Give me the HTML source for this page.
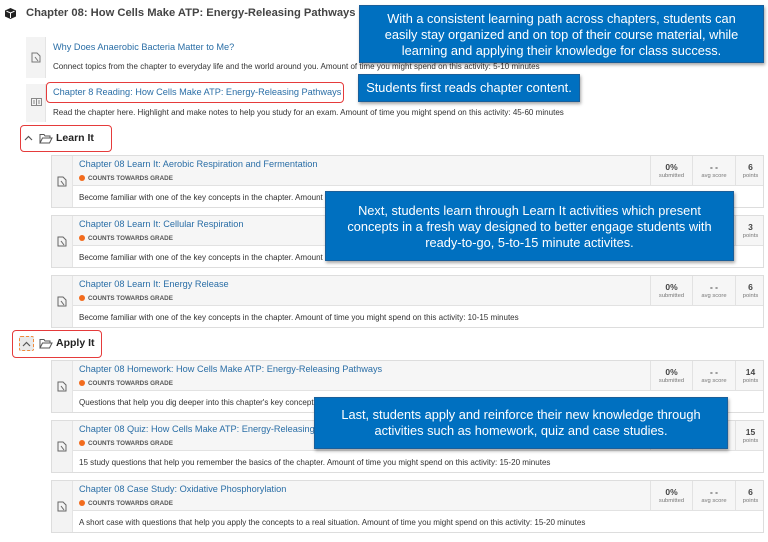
<!DOCTYPE html>
<html><head><meta charset="utf-8"><style>
*{margin:0;padding:0;box-sizing:border-box}
body{width:768px;height:542px;background:#fff;font-family:"Liberation Sans",sans-serif;position:relative;overflow:hidden;color:#333}
.a{position:absolute}
.title{left:26px;top:7px;font-size:11.2px;font-weight:bold;color:#444;white-space:nowrap}
.lnk{color:#2a6ea6;font-size:9.2px;white-space:nowrap}
.desc{font-size:8.05px;color:#333;white-space:nowrap}
.icol{background:#f3f3f3;border-right:1px solid #e4e4e4}
.card{border:1px solid #ddd;background:#fff}
.hdr{position:absolute;left:21px;right:0;top:0;height:30px;background:#f6f6f6;border-bottom:1px solid #e2e2e2}
.cnt{position:absolute;left:6px;top:19px;font-size:6.3px;font-weight:bold;color:#555;white-space:nowrap}
.cnt:before{content:"";display:inline-block;width:6px;height:6px;border-radius:50%;background:#f26b1d;margin-right:3px;vertical-align:-1px}
.st{position:absolute;top:0;height:30px;border-left:1px solid #e2e2e2;text-align:center;font-size:8.5px;font-weight:bold;color:#444;padding-top:6px}
.st small{display:block;font-size:5.8px;font-weight:normal;color:#777;margin-top:1px}
.call{background:#0070c0;color:#fff;font-size:12.8px;text-align:center;line-height:16px;box-shadow:1px 2px 3px rgba(0,0,0,.35);border:1px solid #1a5f9a}
.red{border:1.5px solid #e53b3b;border-radius:4px}
.sec{font-size:10.5px;font-weight:bold;color:#222}
</style></head><body>

<svg class="a" style="left:4px;top:7px" width="13" height="13" viewBox="0 0 13 13"><path d="M6.5 1 L12 3.5 V9.5 L6.5 12 L1 9.5 V3.5 Z" fill="#222"/><path d="M6.5 5.5 V11 M2.5 4.2 L6.5 6 L10.5 4.2" stroke="#fff" stroke-width="1" fill="none"/></svg>
<div class="a title">Chapter 08: How Cells Make ATP: Energy-Releasing Pathways</div>

<div class="a icol" style="left:26px;top:37px;width:20px;height:41px"></div>
<svg class="a" style="left:31px;top:52px" width="10" height="11" viewBox="0 0 10 11"><path d="M1 1H6L9 4V10H1Z" fill="none" stroke="#777" stroke-width="1"/><path d="M4 5L7 9" stroke="#777"/></svg>
<div class="a lnk" style="left:53px;top:42px">Why Does Anaerobic Bacteria Matter to Me?</div>
<div class="a desc" style="left:53px;top:62px">Connect topics from the chapter to everyday life and the world around you. Amount of time you might spend on this activity: 5-10 minutes</div>

<div class="a icol" style="left:26px;top:84px;width:20px;height:38px"></div>
<svg class="a" style="left:31px;top:98px" width="11" height="8" viewBox="0 0 11 8"><rect x="0.5" y="0.5" width="10" height="7" fill="none" stroke="#888"/><path d="M5.5 1V7M2 3H4M2 5H4M7 3H9M7 5H9" stroke="#888"/></svg>
<div class="a red" style="left:46px;top:82px;width:298px;height:21px"></div>
<div class="a lnk" style="left:53px;top:87px">Chapter 8 Reading: How Cells Make ATP: Energy-Releasing Pathways</div>
<div class="a desc" style="left:53px;top:108px">Read the chapter here. Highlight and make notes to help you study for an exam. Amount of time you might spend on this activity: 45-60 minutes</div>

<div class="a red" style="left:20px;top:125px;width:92px;height:27px"></div>
<svg class="a" style="left:24px;top:135px" width="9" height="6" viewBox="0 0 9 6"><path d="M1 5L4.5 1.5L8 5" fill="none" stroke="#555" stroke-width="1.2"/></svg>
<svg class="a" style="left:39px;top:133px" width="14" height="11" viewBox="0 0 14 11"><path d="M1 10V1.5H5L6 3H11V5M1 10L3.5 5H13L10.5 10Z" fill="none" stroke="#555" stroke-width="1"/></svg>
<div class="a sec" style="left:56px;top:132px">Learn It</div>

<div class="a red" style="left:12px;top:330px;width:90px;height:28px"></div>
<div class="a" style="left:19px;top:336px;width:15px;height:15px;border:1px dashed #f08a3a;background:#e9e9e9;border-radius:2px"></div>
<svg class="a" style="left:22px;top:341px" width="9" height="6" viewBox="0 0 9 6"><path d="M1 5L4.5 1.5L8 5" fill="none" stroke="#555" stroke-width="1.2"/></svg>
<svg class="a" style="left:39px;top:338px" width="14" height="11" viewBox="0 0 14 11"><path d="M1 10V1.5H5L6 3H11V5M1 10L3.5 5H13L10.5 10Z" fill="none" stroke="#555" stroke-width="1"/></svg>
<div class="a sec" style="left:56px;top:337px">Apply It</div>

<div id="cards"></div>
<script>
var items=[
[155,"Chapter 08 Learn It: Aerobic Respiration and Fermentation","6","Become familiar with one of the key concepts in the chapter. Amount"],
[215,"Chapter 08 Learn It: Cellular Respiration","3","Become familiar with one of the key concepts in the chapter. Amount"],
[275,"Chapter 08 Learn It: Energy Release","6","Become familiar with one of the key concepts in the chapter. Amount of time you might spend on this activity: 10-15 minutes"],
[360,"Chapter 08 Homework: How Cells Make ATP: Energy-Releasing Pathways","14","Questions that help you dig deeper into this chapter's key concepts."],
[420,"Chapter 08 Quiz: How Cells Make ATP: Energy-Releasing Pa","15","15 study questions that help you remember the basics of the chapter. Amount of time you might spend on this activity: 15-20 minutes"],
[480,"Chapter 08 Case Study: Oxidative Phosphorylation","6","A short case with questions that help you apply the concepts to a real situation. Amount of time you might spend on this activity: 15-20 minutes"]];
var h="";
items.forEach(function(it){
h+='<div class="a card" style="left:51px;top:'+it[0]+'px;width:713px;height:53px">'+
'<div class="a icol" style="left:0;top:0;width:21px;height:51px"></div>'+
'<svg class="a" style="left:5px;top:20px" width="10" height="11" viewBox="0 0 10 11"><path d="M1 1H6L9 4V10H1Z" fill="none" stroke="#666" stroke-width="1"/><path d="M4 5L7 9" stroke="#666"/></svg>'+
'<div class="hdr"><div class="a lnk" style="left:6px;top:3px">'+it[1]+'</div><div class="cnt">COUNTS TOWARDS GRADE</div>'+
'<div class="st" style="left:577px;width:42px">0%<small>submitted</small></div>'+
'<div class="st" style="left:619px;width:43px">- -<small>avg score</small></div>'+
'<div class="st" style="left:662px;width:30px">'+it[2]+'<small>points</small></div></div>'+
'<div class="a desc" style="left:27px;top:37px">'+it[3]+'</div></div>';
});
document.getElementById("cards").innerHTML=h;
</script>

<div class="a call" style="left:359px;top:5px;width:405px;height:58px;padding:5px 16px 0">With a consistent learning path across chapters, students can easily stay organized and on top of their course material, while learning and applying their knowledge for class success.</div>
<div class="a call" style="left:358px;top:74px;width:222px;height:28px;padding-top:5px">Students first reads chapter content.</div>
<div class="a call" style="left:325px;top:191px;width:409px;height:70px;padding:11px 14px 0">Next, students learn through Learn It activities which present concepts in a fresh way designed to better engage students with ready-to-go, 5-to-15 minute activites.</div>
<div class="a call" style="left:314px;top:397px;width:414px;height:52px;padding:9px 14px 0">Last, students apply and reinforce their new knowledge through activities such as homework, quiz and case studies.</div>
</body></html>
